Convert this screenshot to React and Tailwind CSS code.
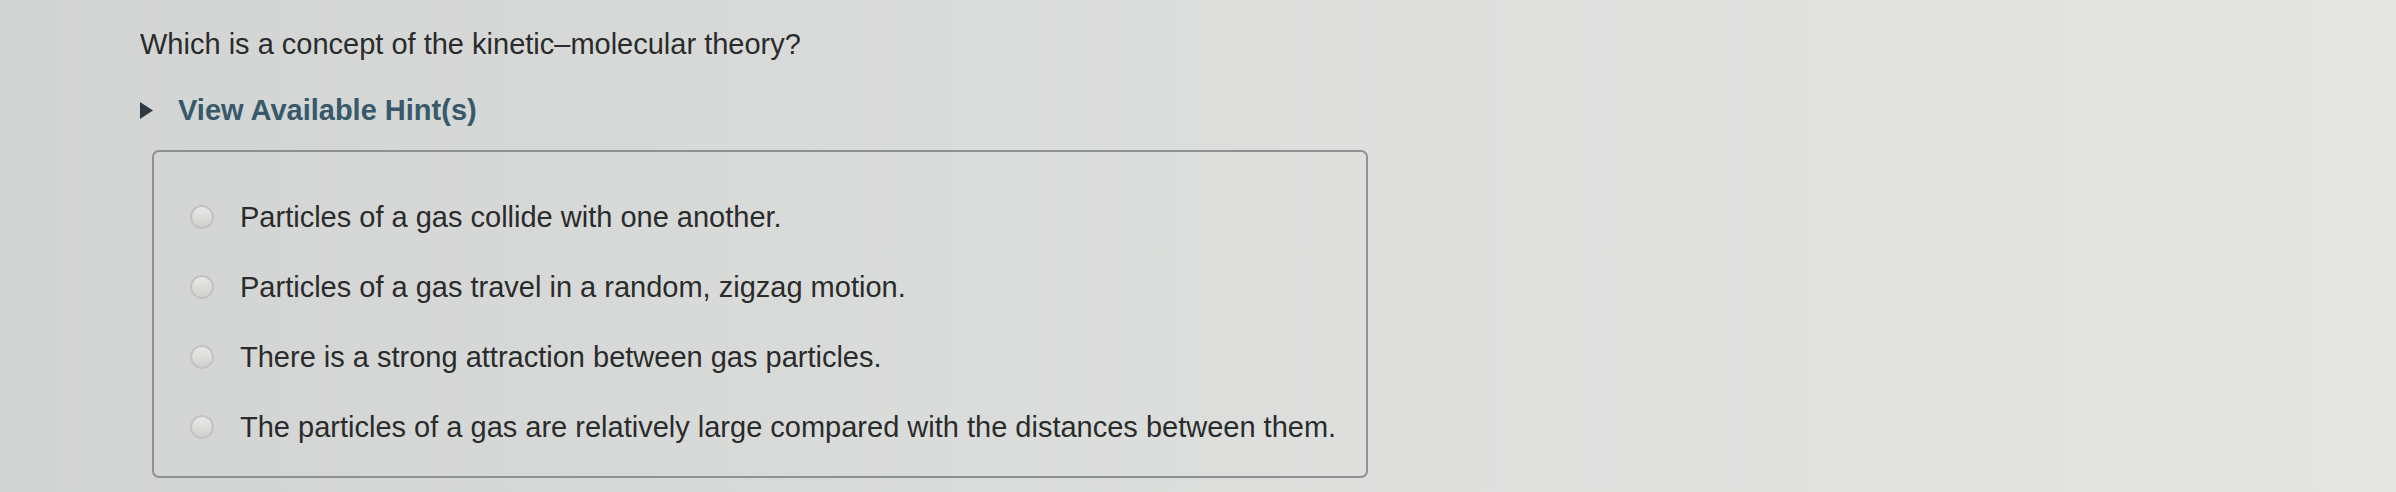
const options = [
  "Particles of a gas collide with one another.",
  "Particles of a gas travel in a random, zigzag motion.",
  "There is a strong attraction between gas particles.",
  "The particles of a gas are relatively large compared with the distances between them.",
];

function Radio() {
  return (
    <span className="h-[24px] w-[24px] shrink-0 rounded-full border-2 border-[#c2c3c1] bg-gradient-to-b from-[#e9eae8] to-[#d0d1cf]" />
  );
}

export default function App() {
  return (
    <div className="h-[492px] w-full overflow-hidden bg-gradient-to-r from-[#d2d4d3] via-[#dcdedc] to-[#e5e5e3] pl-[140px] pt-[27px] font-['Liberation_Sans',Arial,sans-serif] text-[#2a2b2b]">
      <p className="text-[29px] leading-[34px]">
        Which is a concept of the kinetic–molecular theory?
      </p>

      <button className="mt-[32px] flex items-center gap-[25px] text-[29px] font-bold leading-[34px] text-[#37596a]">
        <svg width="13" height="17" viewBox="0 0 13 17" className="shrink-0">
          <path d="M0 0 L13 8.5 L0 17 Z" fill="#2d3a40" />
        </svg>
        View Available Hint(s)
      </button>

      <div className="ml-[12px] mt-[23px] w-[1216px] rounded-[7px] border-2 border-[#8f9190] pb-[32px] pl-[36px] pt-[48px]">
        <div className="flex flex-col gap-[36px]">
          {options.map((text) => (
            <label key={text} className="flex items-center gap-[26px]">
              <Radio />
              <span className="text-[29px] leading-[34px]">{text}</span>
            </label>
          ))}
        </div>
      </div>
    </div>
  );
}
